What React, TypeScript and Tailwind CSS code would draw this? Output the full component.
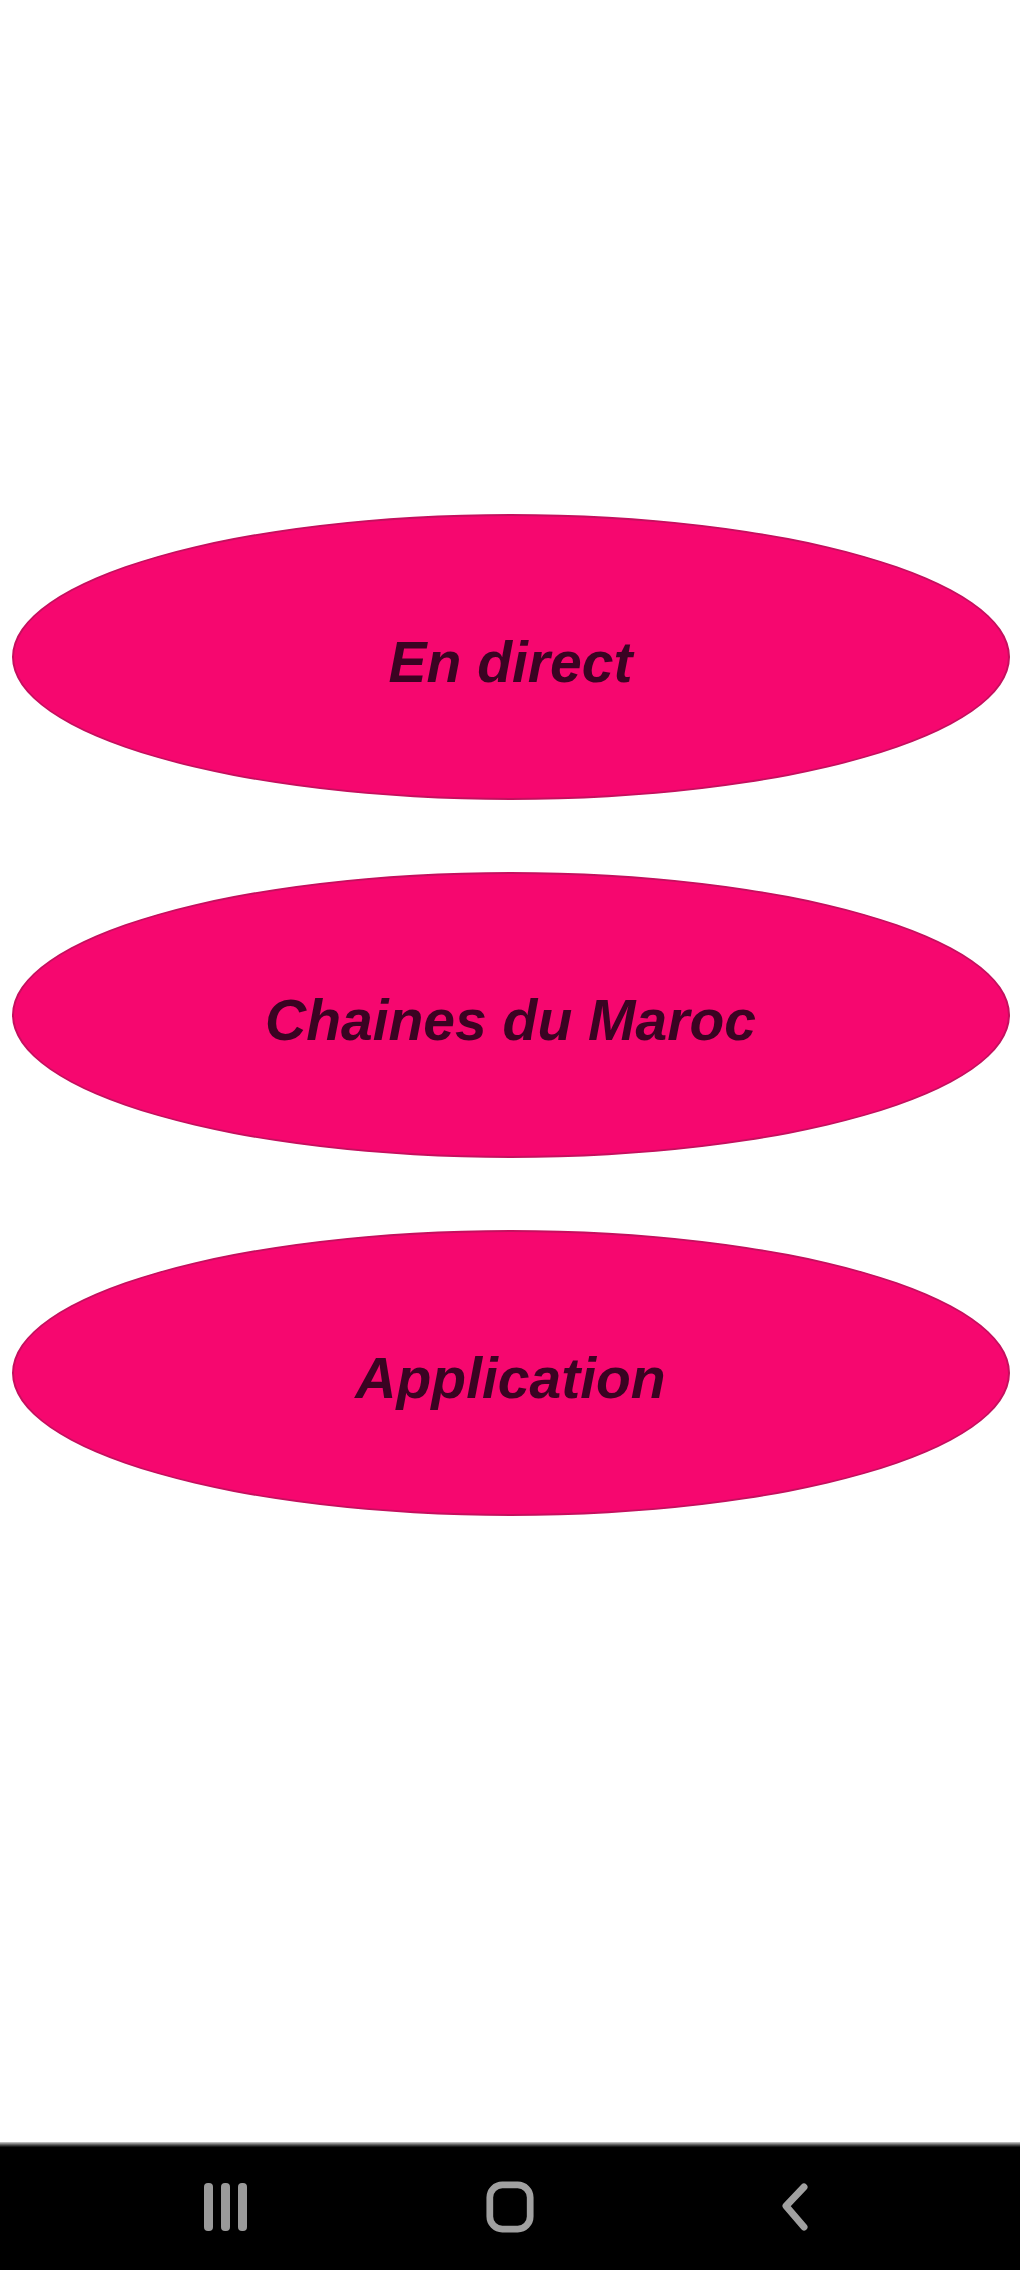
import React from "react";

const Pill = ({ label }: { label: string }) => (
  <div className="w-[998px] h-[286px] mx-auto rounded-[50%] bg-[#f6076f] border-2 border-[#c4105e] flex items-center justify-center pt-[10px]">
    <span
      className="text-[57px] font-bold italic text-[#3a0322] leading-none"
      style={{ fontFamily: '"Liberation Sans", Arial, sans-serif' }}
    >
      {label}
    </span>
  </div>
);

export default function App() {
  return (
    <div className="w-[1020px] h-[2270px] bg-white flex flex-col overflow-hidden">
      <div className="flex-1 pt-[514px] flex flex-col gap-[72px] pl-[1px]">
        <Pill label="En direct" />
        <Pill label="Chaines du Maroc" />
        <Pill label="Application" />
      </div>
      <div className="h-[6px] bg-gradient-to-b from-[#d0d0d0] to-[#000000]" />
      <div className="h-[122px] bg-black flex items-center justify-center gap-[234px] pb-[4px]">
        <div className="w-[50px] h-[54px] flex items-center justify-center">
          <svg width="50" height="52" viewBox="0 0 50 52">
            <rect x="3" y="2" width="9" height="48" rx="4" fill="#9a9a9a" />
            <rect x="20" y="2" width="9" height="48" rx="4" fill="#9a9a9a" />
            <rect x="37" y="2" width="9" height="48" rx="4" fill="#9a9a9a" />
          </svg>
        </div>
        <div className="w-[50px] h-[54px] flex items-center justify-center">
          <svg width="52" height="56" viewBox="0 0 52 56">
            <rect x="5" y="5" width="42" height="46" rx="13" fill="none" stroke="#a0a0a0" strokeWidth="7" />
          </svg>
        </div>
        <div className="w-[50px] h-[54px] flex items-center justify-center">
          <svg width="40" height="50" viewBox="0 0 40 50">
            <path d="M30 5 L12 24 L30 45" fill="none" stroke="#a0a0a0" strokeWidth="7" strokeLinecap="round" strokeLinejoin="round" />
          </svg>
        </div>
      </div>
    </div>
  );
}
